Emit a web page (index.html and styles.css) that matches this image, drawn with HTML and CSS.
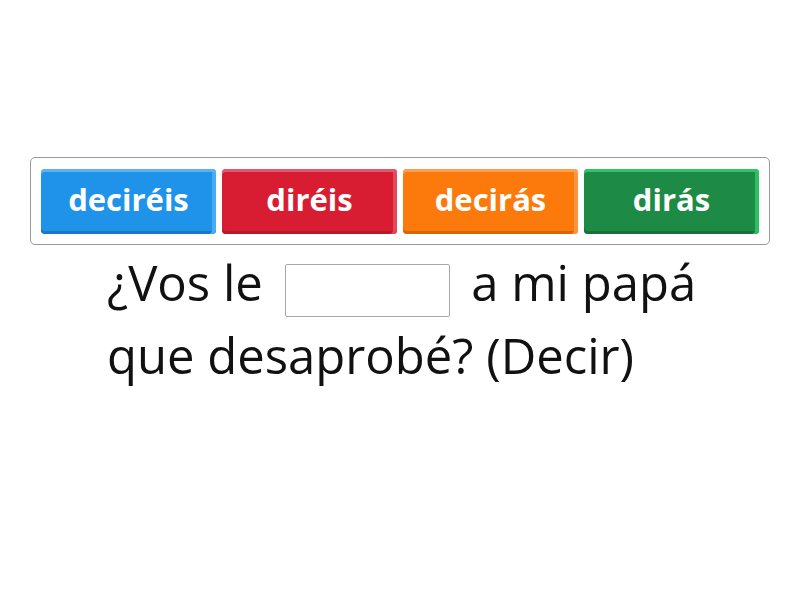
FILE: index.html
```html
<!DOCTYPE html>
<html lang="es">
<head>
<meta charset="utf-8">
<link rel="stylesheet" href="styles.css">
</head>
<body>
<div class="page">
  <div class="tray">
    <div class="tile blue">deciréis</div>
    <div class="tile red">diréis</div>
    <div class="tile orange">decirás</div>
    <div class="tile green">dirás</div>
  </div>
  <p class="sentence">¿Vos le <span class="blank"></span> a mi papá que desaprobé? (Decir)</p>
</div>
</body>
</html>
```
FILE: styles.css
```css
html, body {
  margin: 0;
  padding: 0;
  background: #fff;
}
body {
  font-family: "Open Sans", "DejaVu Sans", sans-serif;
  width: 800px;
  height: 600px;
  overflow: hidden;
}
.page {
  padding: 157px 30px 0 30px;
}
.tray {
  display: flex;
  gap: 6px;
  border: 1px solid #9a9a9a;
  border-radius: 5px;
  padding: 11px 10px 10px 10px;
}
.tile {
  flex: 1;
  height: 65px;
  box-sizing: border-box;
  border-radius: 4px;
  color: #fff;
  font-weight: 700;
  font-size: 31px;
  display: flex;
  align-items: center;
  justify-content: center;
  padding-bottom: 5px;
}
.blue {
  background: #1f92ea;
  box-shadow: inset 0 3px 0 #5ab4f4, inset -4px 0 0 #4aaaf2, inset 0 -3px 0 #1877c6;
}
.red {
  background: #d81d32;
  box-shadow: inset 0 3px 0 #e5566a, inset -4px 0 0 #e24a5c, inset 0 -3px 0 #b8172a;
}
.orange {
  background: #fc7a0c;
  box-shadow: inset 0 3px 0 #fd9f4e, inset -4px 0 0 #fd953e, inset 0 -3px 0 #d9650a;
}
.green {
  background: #1d8a46;
  box-shadow: inset 0 3px 0 #2fc564, inset -4px 0 0 #2dbf60, inset 0 -3px 0 #187138;
}
.sentence {
  margin: 1px 0 0 77px;
  width: 620px;
  font-size: 49px;
  line-height: 73px;
  color: #111;
}
.blank {
  display: inline-block;
  width: 165px;
  height: 53px;
  box-sizing: border-box;
  border: 1px solid #a8a8a8;
  border-radius: 2px;
  vertical-align: -16px;
  margin: 0 9px;
}
```
